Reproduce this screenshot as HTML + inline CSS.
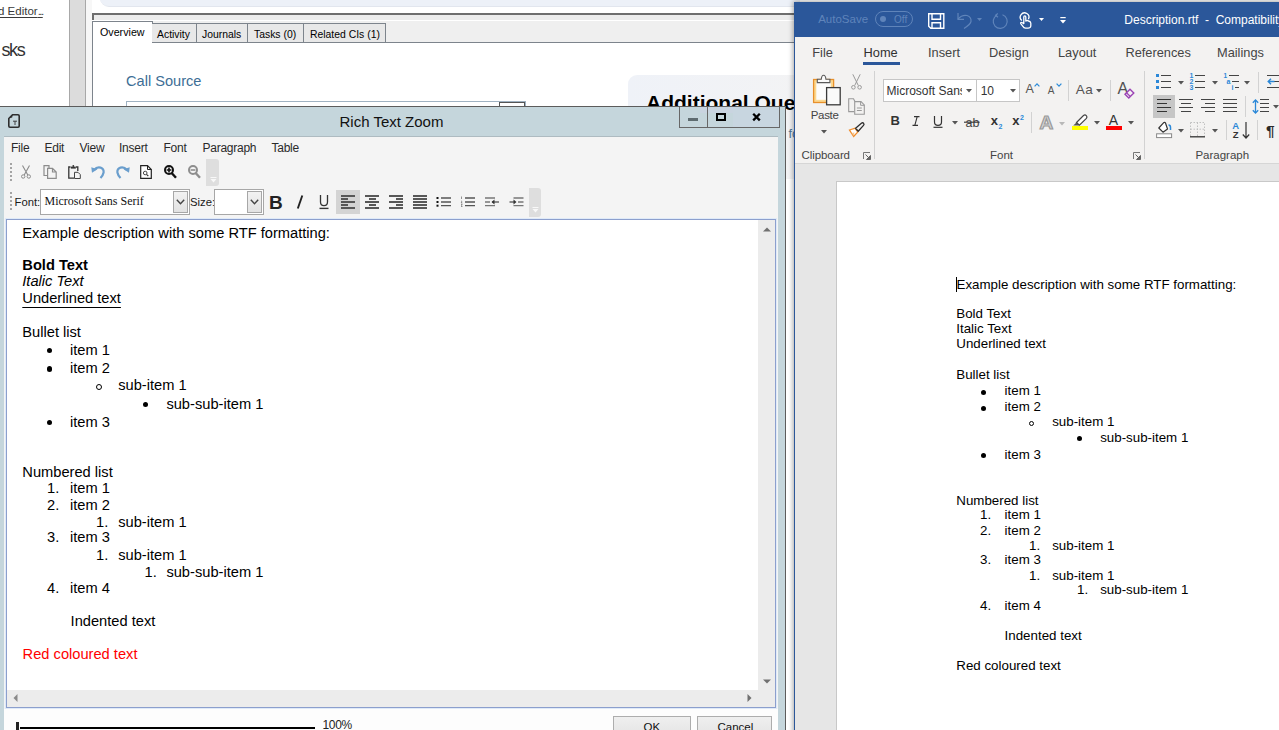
<!DOCTYPE html>
<html><head><meta charset="utf-8">
<style>
*{box-sizing:border-box}
html,body{margin:0;padding:0}
body{width:1279px;height:730px;overflow:hidden;position:relative;background:#fff;font-family:"Liberation Sans",sans-serif;color:#000}
.a{position:absolute}
.t{position:absolute;white-space:pre;line-height:1}
svg{position:absolute;overflow:visible}
</style></head><body>

<!-- ===== Background app ===== -->
<div class="t" style="left:-2px;top:6px;font-size:11.5px;color:#3a3a3a;text-decoration:underline;text-underline-offset:2px">d Editor<span style="letter-spacing:-1.5px">...</span></div>
<div class="t" style="left:1.5px;top:40.8px;font-size:18px;color:#333;letter-spacing:-1.4px">sks</div>
<div class="a" style="left:69px;top:0;width:17px;height:106px;background:#dcdcdc;border-left:1px solid #a8a8a8;border-right:1px solid #a8a8a8"></div>
<div class="a" style="left:86px;top:0;width:6px;height:106px;background:#f7f7f7"></div>
<!-- top rounded bluish box -->
<div class="a" style="left:100px;top:-20px;width:700px;height:27px;background:#edf1f8;border-radius:0 0 0 9px;border-bottom:1px solid #e2e6ee"></div>
<!-- dark line + band -->
<div class="a" style="left:92px;top:13px;width:702px;height:2px;background:#6e6e6e"></div>
<div class="a" style="left:92px;top:15px;width:2px;height:5px;background:#6e6e6e"></div>
<div class="a" style="left:94px;top:15px;width:700px;height:5px;background:#ececec"></div>
<div class="a" style="left:92px;top:20px;width:702px;height:1px;background:#fff"></div>
<div class="a" style="left:92px;top:21px;width:702px;height:22px;background:#efefef"></div>
<div class="a" style="left:92px;top:42px;width:702px;height:1px;background:#7d848c"></div>
<div class="a" style="left:92px;top:43px;width:702px;height:63px;background:#fff"></div>
<!-- tabs -->
<div class="a" style="left:92px;top:21px;width:61px;height:22px;background:#fff;border:1px solid #7d848c;border-bottom:none"></div>
<div class="t" style="left:100px;top:27px;font-size:10.7px;color:#000">Overview</div>
<div class="a" style="left:92px;top:43px;width:1px;height:63px;background:#7d848c"></div>
<div class="a" style="left:152px;top:23px;width:45px;height:20px;background:#e8e8e8;border:1px solid #7d848c;border-left:none"></div>
<div class="t" style="left:157px;top:29.5px;font-size:10.4px">Activity</div>
<div class="a" style="left:196px;top:23px;width:52px;height:20px;background:#e8e8e8;border:1px solid #7d848c"></div>
<div class="t" style="left:202px;top:29.5px;font-size:10.4px">Journals</div>
<div class="a" style="left:247px;top:23px;width:57px;height:20px;background:#e8e8e8;border:1px solid #7d848c"></div>
<div class="t" style="left:254px;top:29.5px;font-size:10.4px">Tasks (0)</div>
<div class="a" style="left:303px;top:23px;width:83px;height:20px;background:#e8e8e8;border:1px solid #7d848c"></div>
<div class="t" style="left:310px;top:29.5px;font-size:10.4px">Related CIs (1)</div>
<!-- call source -->
<div class="t" style="left:126px;top:73.5px;font-size:14.6px;color:#3d6e95">Call Source</div>
<div class="a" style="left:126px;top:101px;width:400px;height:10px;background:#fff;border:1px solid #9fb2c2"></div>
<div class="a" style="left:499px;top:102px;width:26px;height:10px;background:#fff;border:1px solid #555"></div>
<!-- additional questions -->
<div class="a" style="left:628px;top:75px;width:180px;height:104px;background:linear-gradient(90deg,#eff2f8,#f3f3f4);border-radius:9px 0 0 0"></div>
<div class="t" style="left:788.5px;top:128px;font-size:12.5px;color:#4d7394">fo</div>
<div class="t" style="left:646px;top:91.5px;font-size:21px;font-weight:bold;color:#000">Additional Que</div>

<!-- ===== Rich Text Zoom dialog ===== -->
<div id="dlg" class="a" style="left:-2px;top:106px;width:788px;height:630px;background:#c5d6dc;border-top:1px solid #5c5c5c;border-right:1px solid #5c5c5c"></div>
<svg style="left:8px;top:114px" width="12" height="14" viewBox="0 0 12 14"><path d="M4.5 0.8 H10 Q11.2 0.8 11.2 2 V12 Q11.2 13.2 10 13.2 H2 Q0.8 13.2 0.8 12 V4.5 Z" fill="none" stroke="#2e2e2e" stroke-width="1.6" stroke-linejoin="round"/><path d="M1.2 4.2 L4.6 0.8 L4.2 3.6 Z" fill="#2e2e2e"/><path d="M5 7.2 H9 M7 7.2 V11" stroke="#333" stroke-width="0.9"/></svg>
<div class="t" style="left:339.5px;top:114px;font-size:15px;color:#111">Rich Text Zoom</div>
<div class="a" style="left:700px;top:107px;width:78px;height:6px;background:#c9d4e0"></div>
<div class="a" style="left:679px;top:107px;width:29px;height:21px;border:1px solid #676767;border-top:none"></div>
<div class="a" style="left:707px;top:107px;width:27px;height:21px;border:1px solid #676767;border-top:none;border-left:none"></div>
<div class="a" style="left:733px;top:107px;width:47px;height:21px;border:1px solid #676767;border-top:none;border-left:none;background:#c8d6e0"></div>
<div class="a" style="left:688px;top:118px;width:10px;height:3px;background:#5e6c70"></div>
<div class="a" style="left:716px;top:113px;width:10px;height:8px;border:2.4px solid #000"></div>
<svg style="left:752px;top:113px" width="9" height="8" viewBox="0 0 9 8"><path d="M1.2 0.8 L7.8 7.4 M7.8 0.8 L1.2 7.4" stroke="#000" stroke-width="2.3"/></svg>
<!-- client area -->
<div class="a" style="left:4px;top:136px;width:774px;height:600px;background:#f4f4f4;border-top:1px solid #aebbc1"></div>
<div class="t" style="left:11px;top:141.7px;font-size:12px;letter-spacing:-0.25px;color:#2a2a2a">File</div>
<div class="t" style="left:44.5px;top:141.7px;font-size:12px;letter-spacing:-0.25px;color:#2a2a2a">Edit</div>
<div class="t" style="left:79.5px;top:141.7px;font-size:12px;letter-spacing:-0.25px;color:#2a2a2a">View</div>
<div class="t" style="left:119px;top:141.7px;font-size:12px;letter-spacing:-0.25px;color:#2a2a2a">Insert</div>
<div class="t" style="left:163.5px;top:141.7px;font-size:12px;letter-spacing:-0.25px;color:#2a2a2a">Font</div>
<div class="t" style="left:202.5px;top:141.7px;font-size:12px;letter-spacing:-0.25px;color:#2a2a2a">Paragraph</div>
<div class="t" style="left:271.5px;top:141.7px;font-size:12px;letter-spacing:-0.25px;color:#2a2a2a">Table</div>
<!-- toolbar 1 -->
<div class="a" style="left:10px;top:163px;width:2px;height:18px;background:repeating-linear-gradient(180deg,#a4a4a4 0 2px,transparent 2px 4px)"></div>
<svg style="left:21px;top:165px" width="10" height="14" viewBox="0 0 10 14"><path d="M1.5 0.5 L6.8 10 M8.5 0.5 L3.2 10" stroke="#8a8a8a" stroke-width="1.1" fill="none"/><circle cx="2.2" cy="11.5" r="1.7" stroke="#8a8a8a" stroke-width="1" fill="none"/><circle cx="7.8" cy="11.5" r="1.7" stroke="#8a8a8a" stroke-width="1" fill="none"/></svg>
<svg style="left:43px;top:165px" width="14" height="14" viewBox="0 0 14 14"><path d="M6 3 V0.7 H1 V10.5 H4" fill="none" stroke="#8c8c8c" stroke-width="1.2"/><path d="M4.6 3.3 H9.5 L13.2 7 V13.3 H4.6 Z M9.5 3.3 V7 H13.2" fill="none" stroke="#8c8c8c" stroke-width="1.2"/></svg>
<svg style="left:68px;top:165px" width="13" height="14" viewBox="0 0 13 14"><path d="M2.5 2 H0.8 V13.2 H6" fill="none" stroke="#333" stroke-width="1.3"/><path d="M8 2 H9.8 V6" fill="none" stroke="#333" stroke-width="1.3"/><path d="M2.8 1.6 H7.8 V3.6 H2.8 Z" fill="#333"/><circle cx="5.3" cy="1" r="0.9" fill="#333"/><path d="M6.5 7.3 H10 L12.3 9.6 V13.5 H6.5 Z" fill="#f4f4f4" stroke="#444" stroke-width="1"/></svg>
<svg style="left:91px;top:165px" width="15" height="14" viewBox="0 0 15 14"><path d="M3 5 Q6 1.5 9.5 2.6 Q13 4 12.6 7.5 Q12 10.5 9.5 13" fill="none" stroke="#6a9ecd" stroke-width="2.2"/><path d="M0.3 2.3 L6.5 4.3 L1 7.8 Z" fill="#6a9ecd"/></svg>
<svg style="left:115px;top:165px" width="15" height="14" viewBox="0 0 15 14"><path d="M12 5 Q9 1.5 5.5 2.6 Q2 4 2.4 7.5 Q3 10.5 5.5 13" fill="none" stroke="#6a9ecd" stroke-width="2.2"/><path d="M14.7 2.3 L8.5 4.3 L14 7.8 Z" fill="#6a9ecd"/></svg>
<svg style="left:140px;top:165px" width="12" height="14" viewBox="0 0 12 14"><path d="M0.7 0.7 H7.5 L11.3 4.5 V13.3 H0.7 Z" fill="#fff" stroke="#222" stroke-width="1.2"/><path d="M7.5 0.7 V4.5 H11.3" fill="none" stroke="#222" stroke-width="1"/><circle cx="5.2" cy="8" r="1.8" fill="none" stroke="#333" stroke-width="0.9"/><path d="M6.5 9.3 L8.3 11" stroke="#333" stroke-width="1.1"/></svg>
<svg style="left:163.5px;top:165px" width="13" height="14" viewBox="0 0 13 14"><circle cx="5" cy="5" r="4" fill="none" stroke="#111" stroke-width="2"/><path d="M5 2.6 V7.4 M2.6 5 H7.4" stroke="#111" stroke-width="1.6"/><path d="M7.6 8 L12 12.8" stroke="#111" stroke-width="2.4"/></svg>
<svg style="left:187.5px;top:165px" width="13" height="14" viewBox="0 0 13 14"><circle cx="5" cy="5" r="4" fill="none" stroke="#8e8e8e" stroke-width="2"/><path d="M2.6 5 H7.4" stroke="#8e8e8e" stroke-width="1.6"/><path d="M7.6 8 L12 12.8" stroke="#8e8e8e" stroke-width="2.4"/></svg>
<div class="a" style="left:206px;top:159px;width:13px;height:27px;background:#dedede;border-radius:0 3px 3px 0"></div>
<svg style="left:210px;top:177px" width="7" height="6" viewBox="0 0 7 6"><path d="M0.5 0.5 H6.5" stroke="#f8f8f8" stroke-width="1"/><path d="M0.5 2 H6.5 L3.5 5.5 Z" fill="#f8f8f8"/></svg>
<!-- toolbar 2 -->
<div class="a" style="left:10px;top:192px;width:2px;height:18px;background:repeating-linear-gradient(180deg,#a4a4a4 0 2px,transparent 2px 4px)"></div>
<div class="t" style="left:14.5px;top:197px;font-size:11.3px;color:#1a1a1a">Font:</div>
<div class="a" style="left:40px;top:189px;width:150px;height:26px;background:#fff;border:1px solid #a7a7a7"></div>
<div class="t" style="left:44.5px;top:195px;font-size:12px;font-family:'Liberation Serif',serif;color:#111">Microsoft Sans Serif</div>
<div class="a" style="left:173px;top:191px;width:15px;height:22px;background:linear-gradient(#f2f2f2,#e2e2e2);border:1px solid #a7a7a7"></div>
<svg style="left:176px;top:199px" width="9" height="6" viewBox="0 0 9 6"><path d="M0.8 0.8 L4.5 4.8 L8.2 0.8" fill="none" stroke="#444" stroke-width="1.4"/></svg>
<div class="t" style="left:190px;top:197px;font-size:11.3px;color:#1a1a1a">Size:</div>
<div class="a" style="left:214px;top:189px;width:50px;height:26px;background:#fff;border:1px solid #a7a7a7"></div>
<div class="a" style="left:247px;top:191px;width:15px;height:22px;background:linear-gradient(#f2f2f2,#e2e2e2);border:1px solid #a7a7a7"></div>
<svg style="left:250px;top:199px" width="9" height="6" viewBox="0 0 9 6"><path d="M0.8 0.8 L4.5 4.8 L8.2 0.8" fill="none" stroke="#444" stroke-width="1.4"/></svg>
<div class="t" style="left:269px;top:193.4px;font-size:19px;font-weight:bold;color:#222">B</div>
<svg style="left:296px;top:195px" width="8" height="14" viewBox="0 0 8 14"><path d="M6.3 0.5 L1.8 13.5" stroke="#222" stroke-width="1.9"/></svg>
<svg style="left:319px;top:195px" width="10" height="15" viewBox="0 0 10 15"><path d="M1.5 0 V7 Q1.5 10.6 5 10.6 Q8.5 10.6 8.5 7 V0" fill="none" stroke="#333" stroke-width="1.3"/><path d="M0.5 13.4 H9.5" stroke="#333" stroke-width="1.4"/></svg>
<div class="a" style="left:336px;top:190px;width:24px;height:24px;background:#d4d4d4"></div>
<div class="a" style="left:341px;top:195.2px;width:14px;height:1.6px;background:#585858"></div><div class="a" style="left:341px;top:198.2px;width:7px;height:1.6px;background:#585858"></div><div class="a" style="left:341px;top:201.2px;width:14px;height:1.6px;background:#585858"></div><div class="a" style="left:341px;top:204.2px;width:7px;height:1.6px;background:#585858"></div><div class="a" style="left:341px;top:207.2px;width:14px;height:1.6px;background:#585858"></div>
<div class="a" style="left:365px;top:195.2px;width:14px;height:1.6px;background:#585858"></div><div class="a" style="left:368.5px;top:198.2px;width:7px;height:1.6px;background:#585858"></div><div class="a" style="left:365px;top:201.2px;width:14px;height:1.6px;background:#585858"></div><div class="a" style="left:368.5px;top:204.2px;width:7px;height:1.6px;background:#585858"></div><div class="a" style="left:365px;top:207.2px;width:14px;height:1.6px;background:#585858"></div>
<div class="a" style="left:389px;top:195.2px;width:14px;height:1.6px;background:#585858"></div><div class="a" style="left:396px;top:198.2px;width:7px;height:1.6px;background:#585858"></div><div class="a" style="left:389px;top:201.2px;width:14px;height:1.6px;background:#585858"></div><div class="a" style="left:396px;top:204.2px;width:7px;height:1.6px;background:#585858"></div><div class="a" style="left:389px;top:207.2px;width:14px;height:1.6px;background:#585858"></div>
<div class="a" style="left:413px;top:195.2px;width:14px;height:1.6px;background:#585858"></div><div class="a" style="left:413px;top:198.2px;width:14px;height:1.6px;background:#585858"></div><div class="a" style="left:413px;top:201.2px;width:14px;height:1.6px;background:#585858"></div><div class="a" style="left:413px;top:204.2px;width:14px;height:1.6px;background:#585858"></div><div class="a" style="left:413px;top:207.2px;width:14px;height:1.6px;background:#585858"></div>
<svg style="left:436px;top:196px" width="16" height="11" viewBox="0 0 16 11"><rect x="0.5" y="1" width="2" height="2" fill="#111"/><rect x="0.5" y="5" width="2" height="2" fill="#111"/><rect x="0.5" y="8.7" width="2" height="2" fill="#111"/><path d="M5 2 H15 M5 6 H15 M5 9.7 H15" stroke="#555" stroke-width="1.3"/></svg>
<svg style="left:460px;top:196px" width="16" height="11" viewBox="0 0 16 11"><path d="M1.5 0.5 V3 M1 4.8 Q2.6 5 1.2 7 H2.4 M1 8.5 H2.2 L1.6 9.5 L2.2 10.5 H1" stroke="#777" stroke-width="0.8" fill="none"/><path d="M5 2 H15 M5 6 H15 M5 9.7 H15" stroke="#555" stroke-width="1.3"/></svg>
<svg style="left:484px;top:196px" width="16" height="11" viewBox="0 0 16 11"><path d="M1 2 H11 M1 6 H6 M1 9.7 H11" stroke="#777" stroke-width="1.3"/><path d="M8 6 H15" stroke="#444" stroke-width="1.2"/><path d="M7.5 6 L10.5 3.5 L10.5 8.5 Z" fill="#333"/></svg>
<svg style="left:509px;top:196px" width="16" height="11" viewBox="0 0 16 11"><path d="M4.5 2 H14.5 M9 6 H14.5 M4.5 9.7 H14.5" stroke="#777" stroke-width="1.3"/><path d="M0.5 6 H6" stroke="#444" stroke-width="1.2"/><path d="M7.5 6 L4.5 3.5 L4.5 8.5 Z" fill="#333"/></svg>
<div class="a" style="left:529px;top:188px;width:12px;height:29px;background:#dedede;border-radius:0 3px 3px 0"></div>
<svg style="left:532px;top:207px" width="7" height="6" viewBox="0 0 7 6"><path d="M0.5 0.5 H6.5" stroke="#f8f8f8" stroke-width="1"/><path d="M0.5 2 H6.5 L3.5 5.5 Z" fill="#f8f8f8"/></svg>
<!-- editor -->
<div class="a" style="left:5px;top:218px;width:772px;height:491px;border:1px solid #dfeaf8"></div>
<div class="a" style="left:6px;top:219px;width:770px;height:489px;background:#fff;border:1px solid #8c9fcd"></div>
<div class="a" style="left:758px;top:220px;width:17px;height:487px;background:#ececec"></div>
<div class="a" style="left:7px;top:690px;width:768px;height:17px;background:#ececec"></div>
<svg style="left:763px;top:227px" width="8" height="5" viewBox="0 0 8 5"><path d="M0 4.5 L4 0.5 L8 4.5 Z" fill="#707070"/></svg>
<svg style="left:763px;top:679px" width="8" height="5" viewBox="0 0 8 5"><path d="M0 0.5 L4 4.5 L8 0.5 Z" fill="#707070"/></svg>
<svg style="left:13px;top:694px" width="5" height="8" viewBox="0 0 5 8"><path d="M4.5 0 L0.5 4 L4.5 8 Z" fill="#8a8a8a"/></svg>
<svg style="left:747px;top:694px" width="5" height="8" viewBox="0 0 5 8"><path d="M0.5 0 L4.5 4 L0.5 8 Z" fill="#707070"/></svg>
<!-- editor text -->
<div class="t" style="left:22.3px;top:226.08px;font-size:14.67px;">Example description with some RTF formatting:</div>
<div class="t" style="left:22.3px;top:258.38px;font-size:14.67px;font-weight:bold">Bold Text</div>
<div class="t" style="left:22.3px;top:274.08px;font-size:14.67px;font-style:italic">Italic Text</div>
<div class="t" style="left:22.3px;top:291.48px;font-size:14.67px;text-decoration:underline;text-underline-offset:3.5px">Underlined text</div>
<div class="t" style="left:22.3px;top:324.78px;font-size:14.67px;">Bullet list</div>
<div class="a" style="left:47.20px;top:348.30px;width:5.2px;height:5.2px;border-radius:50%;background:#000"></div>
<div class="t" style="left:70px;top:342.98px;font-size:14.67px;">item 1</div>
<div class="a" style="left:47.20px;top:366.40px;width:5.2px;height:5.2px;border-radius:50%;background:#000"></div>
<div class="t" style="left:70px;top:361.08px;font-size:14.67px;">item 2</div>
<div class="a" style="left:95.50px;top:384.30px;width:6px;height:6px;border-radius:50%;border:1.1px solid #000"></div>
<div class="t" style="left:118.2px;top:377.98px;font-size:14.67px;">sub-item 1</div>
<div class="a" style="left:143.00px;top:401.90px;width:5.2px;height:5.2px;border-radius:50%;background:#000"></div>
<div class="t" style="left:166.4px;top:396.58px;font-size:14.67px;">sub-sub-item 1</div>
<div class="a" style="left:47.20px;top:419.90px;width:5.2px;height:5.2px;border-radius:50%;background:#000"></div>
<div class="t" style="left:70px;top:414.58px;font-size:14.67px;">item 3</div>
<div class="t" style="left:22.3px;top:464.78px;font-size:14.67px;">Numbered list</div>
<div class="t" style="left:47px;top:481.38px;font-size:14.67px;">1.</div>
<div class="t" style="left:70px;top:481.38px;font-size:14.67px;">item 1</div>
<div class="t" style="left:47px;top:497.58px;font-size:14.67px;">2.</div>
<div class="t" style="left:70px;top:497.58px;font-size:14.67px;">item 2</div>
<div class="t" style="left:96px;top:514.68px;font-size:14.67px;">1.</div>
<div class="t" style="left:118.2px;top:514.68px;font-size:14.67px;">sub-item 1</div>
<div class="t" style="left:47px;top:530.48px;font-size:14.67px;">3.</div>
<div class="t" style="left:70px;top:530.48px;font-size:14.67px;">item 3</div>
<div class="t" style="left:96px;top:547.58px;font-size:14.67px;">1.</div>
<div class="t" style="left:118.2px;top:547.58px;font-size:14.67px;">sub-item 1</div>
<div class="t" style="left:144.5px;top:564.58px;font-size:14.67px;">1.</div>
<div class="t" style="left:166.4px;top:564.58px;font-size:14.67px;">sub-sub-item 1</div>
<div class="t" style="left:47px;top:580.78px;font-size:14.67px;">4.</div>
<div class="t" style="left:70px;top:580.78px;font-size:14.67px;">item 4</div>
<div class="t" style="left:70.6px;top:614.48px;font-size:14.67px;">Indented text</div>
<div class="t" style="left:22.6px;top:647.48px;font-size:14.67px;color:#f00">Red coloured text</div>
<!-- bottom area -->
<div class="a" style="left:4px;top:709px;width:774px;height:30px;background:#fdfdfd"></div>
<div class="a" style="left:16px;top:722px;width:3px;height:10px;background:#222"></div>
<div class="a" style="left:20px;top:727px;width:295px;height:2px;background:#000"></div>
<div class="t" style="left:322.5px;top:718.8px;font-size:12px;color:#222;letter-spacing:-0.3px">100%</div>
<div class="a" style="left:613px;top:716px;width:78px;height:24px;background:linear-gradient(#efefef,#e3e3e3);border:1px solid #adadad"></div>
<div class="t" style="left:643.5px;top:721.5px;font-size:11.5px;color:#111">OK</div>
<div class="a" style="left:697px;top:716px;width:75px;height:24px;background:linear-gradient(#efefef,#e3e3e3);border:1px solid #adadad"></div>
<div class="t" style="left:717.5px;top:721.5px;font-size:11.5px;color:#111">Cancel</div>
<!-- ===== Word window ===== -->
<div id="word" class="a" style="left:794px;top:2px;width:490px;height:740px;background:#e6e6e6;border-left:1px solid #2b579a;box-shadow:-1px -1px 5px rgba(0,0,0,0.35)"></div>
<div class="a" style="left:795px;top:2px;width:490px;height:35px;background:#2b579a"></div>
<div class="t" style="left:818.2px;top:13.96px;font-size:11.5px;color:#5f84ba">AutoSave</div>
<div class="a" style="left:875px;top:11px;width:38px;height:16px;border:1px solid #5f84ba;border-radius:8px"></div>
<div class="a" style="left:879.6px;top:15.8px;width:6.6px;height:6.6px;border-radius:50%;background:#5f84ba"></div>
<div class="t" style="left:894px;top:14.53px;font-size:10px;color:#5f84ba">Off</div>
<svg style="left:928px;top:13px" width="17" height="16" viewBox="0 0 17 16"><path d="M0.7 0.7 H15.8 V15.3 H2.8 L0.7 13.2 Z" fill="none" stroke="#fff" stroke-width="1.4"/><path d="M4 0.7 V6.2 H12.5 V0.7" fill="none" stroke="#fff" stroke-width="1.4"/><path d="M4 15.3 V9.8 H12.5 V15.3" fill="none" stroke="#fff" stroke-width="1.4"/></svg>
<svg style="left:957px;top:12px" width="16" height="17" viewBox="0 0 16 17"><path d="M1 7 Q5 2.5 10 3.5 Q14.5 5 14 9.5 Q13.3 12.5 7 16.5" fill="none" stroke="#5f84ba" stroke-width="1.2"/><path d="M1 1 V7.3 H7" fill="none" stroke="#5f84ba" stroke-width="1.2"/></svg>
<svg style="left:977px;top:17.8px" width="5" height="3" viewBox="0 0 5 3"><path d="M0 0 H5 L2.5 3 Z" fill="#5f84ba"/></svg>
<svg style="left:991.5px;top:13px" width="17" height="17" viewBox="0 0 17 17"><path d="M5 2.2 A7 7 0 1 0 10.5 1.8" fill="none" stroke="#5f84ba" stroke-width="1.2"/><path d="M5.8 0.5 L3.6 2.3 L6 4.2" fill="none" stroke="#5f84ba" stroke-width="1.2"/></svg>
<svg style="left:1018.5px;top:12px" width="13" height="17" viewBox="0 0 13 17"><path d="M2.8 8.5 A4.3 4.3 0 1 1 9.4 7.2" fill="none" stroke="#fff" stroke-width="1.3"/><path d="M4.8 12 V5 Q4.8 3.8 5.8 3.8 Q6.8 3.8 6.8 5 V9 Q8.3 8 9.5 9 Q11.5 9.2 11.8 11 V14 Q11.5 16.2 9 16.2 H6.5 Q5 16 3.5 13.8 L1.8 11.6 Q1.3 10.5 2.4 10.3 Q3.3 10.3 4.8 12" fill="#2b579a" stroke="#fff" stroke-width="1.3" stroke-linejoin="round"/></svg>
<svg style="left:1039px;top:17.8px" width="5" height="3" viewBox="0 0 5 3"><path d="M0 0 H5 L2.5 3 Z" fill="#fff"/></svg>
<svg style="left:1059.5px;top:16.5px" width="6" height="7" viewBox="0 0 6 7"><path d="M0.3 0.6 H5.7" stroke="#fff" stroke-width="1.2"/><path d="M0 3 H6 L3 6.6 Z" fill="#fff"/></svg>
<div class="t" style="left:1124.3px;top:13.64px;font-size:12px;color:#fff">Description.rtf  -  Compatibility Mode  -  Word</div>
<div class="a" style="left:795px;top:37px;width:490px;height:126px;background:#f3f2f1"></div>
<div class="a" style="left:795px;top:163px;width:490px;height:1px;background:#d6d6d6"></div>
<div class="t" style="left:812.3px;top:46.66px;font-size:12.8px;color:#444">File</div>
<div class="t" style="left:863.6px;top:46.66px;font-size:12.8px;color:#444;color:#303030">Home</div>
<div class="t" style="left:928px;top:46.66px;font-size:12.8px;color:#444">Insert</div>
<div class="t" style="left:989px;top:46.66px;font-size:12.8px;color:#444">Design</div>
<div class="t" style="left:1058px;top:46.66px;font-size:12.8px;color:#444">Layout</div>
<div class="t" style="left:1125.4px;top:46.66px;font-size:12.8px;color:#444">References</div>
<div class="t" style="left:1217px;top:46.66px;font-size:12.8px;color:#444">Mailings</div>
<div class="a" style="left:863px;top:62px;width:37px;height:3px;background:#2b579a"></div>
<svg style="left:812px;top:74px" width="30" height="32" viewBox="0 0 30 32"><rect x="1.6" y="5.5" width="20" height="23" fill="#fcd88f" stroke="#e8902a" stroke-width="1.3"/><rect x="4.3" y="8.3" width="14.5" height="17.5" fill="#fcfcfc"/><path d="M5.3 8.6 V5.2 H9.3 Q9.6 1.2 11.6 1.2 Q13.6 1.2 13.9 5.2 H17.9 V8.6 Z" fill="#fafafa" stroke="#5a5a5a" stroke-width="1.1"/><rect x="14.6" y="13.6" width="13.6" height="17.2" fill="#fafafa" stroke="#3a3a3a" stroke-width="1.3"/></svg>
<div class="t" style="left:810.7px;top:110.46px;font-size:11.5px;color:#444;letter-spacing:-0.3px">Paste</div>
<svg style="left:820.7px;top:129.7px" width="6" height="4" viewBox="0 0 6 4"><path d="M0 0 H6 L3 3.5 Z" fill="#555"/></svg>
<svg style="left:850.5px;top:74px" width="11" height="16" viewBox="0 0 11 16"><path d="M1.8 0.3 L7.3 11.5 M9.2 0.3 L3.7 11.5" stroke="#9a9a9a" stroke-width="1" fill="none"/><circle cx="2.4" cy="13.3" r="1.8" stroke="#9a9a9a" stroke-width="1" fill="none"/><circle cx="8.6" cy="13.3" r="1.8" stroke="#9a9a9a" stroke-width="1" fill="none"/></svg>
<svg style="left:847.5px;top:97.5px" width="17" height="17" viewBox="0 0 17 17"><path d="M6.8 3.2 L5.5 0.7 H0.7 V13.6 H6" fill="none" stroke="#9a9a9a" stroke-width="1.1"/><path d="M6.7 3.6 H13 L16.3 6.9 V16.3 H6.7 Z" fill="#f3f2f1" stroke="#9a9a9a" stroke-width="1.1"/><path d="M12.6 3.6 V7.3 H16.3 M8.9 10 H13.8 M8.9 12.5 H13.8" stroke="#9a9a9a" stroke-width="1" fill="none"/></svg>
<svg style="left:848px;top:121.5px" width="17" height="16" viewBox="0 0 17 16"><path d="M0.5 7.8 L7.2 5.6 L10.6 10 L5.6 15.4 Z" fill="#f08c2a"/><path d="M2.4 8.3 L6.8 6.9 L9 9.9 L5.6 13.6 Z" fill="#fff"/><path d="M3.6 11 L6.5 10.5 L5.6 13.6 Z" fill="#f9c48a"/><path d="M7.6 6.2 L13.4 1.2 Q14.6 0.3 15.6 1.3 Q16.5 2.4 15.5 3.4 L10.2 9.2 Z" fill="#f3f2f1" stroke="#2e2e2e" stroke-width="1.3" stroke-linejoin="round"/></svg>
<div class="a" style="left:874px;top:71px;width:1px;height:88px;background:#d2d2d2"></div>
<div class="t" style="left:801.6px;top:149.96px;font-size:11.5px;color:#444;letter-spacing:-0.1px">Clipboard</div>
<svg style="left:863px;top:152px" width="8" height="8" viewBox="0 0 8 8"><path d="M0.5 7 V0.5 H7" fill="none" stroke="#777" stroke-width="1"/><path d="M2.5 2.5 L6.5 6.5 M7.5 3.5 V7.5 H3.5 Z" stroke="#666" stroke-width="1" fill="#666"/></svg>
<div class="a" style="left:883px;top:79px;width:94px;height:23px;background:#fff;border:1px solid #c6c6c6"></div>
<div class="a" style="left:976px;top:79px;width:44px;height:23px;background:#fff;border:1px solid #c6c6c6"></div>
<div class="a" style="left:886px;top:80px;width:76px;height:20px;overflow:hidden"><div class="t" style="left:0.5px;top:5px;font-size:12px;color:#333">Microsoft Sans</div></div>
<svg style="left:966.3px;top:88.5px" width="6" height="4" viewBox="0 0 6 4"><path d="M0 0 H6 L3 3.5 Z" fill="#555"/></svg>
<div class="t" style="left:980.7px;top:85.04px;font-size:12px;color:#333">10</div>
<svg style="left:1009.5px;top:88.5px" width="6" height="4" viewBox="0 0 6 4"><path d="M0 0 H6 L3 3.5 Z" fill="#555"/></svg>
<div class="t" style="left:890.5px;top:114.49px;font-size:13px;font-weight:bold;color:#333">B</div>
<svg style="left:912px;top:116px" width="8" height="10" viewBox="0 0 8 10"><path d="M2 0.6 H7.5 M0.5 9.4 H6 M5.2 0.6 L2.8 9.4" stroke="#333" stroke-width="1.1" fill="none"/></svg>
<svg style="left:933px;top:116px" width="10" height="12" viewBox="0 0 10 12"><path d="M1.5 0 V6 Q1.5 9.3 5 9.3 Q8.5 9.3 8.5 6 V0" fill="none" stroke="#333" stroke-width="1.2"/><path d="M0.5 11.3 H9.5" stroke="#333" stroke-width="1.2"/></svg>
<svg style="left:951.5px;top:120.8px" width="6" height="4" viewBox="0 0 6 4"><path d="M0 0 H6 L3 3.5 Z" fill="#555"/></svg>
<svg style="left:964px;top:115px" width="16" height="13" viewBox="0 0 16 13"><text x="1.5" y="11.5" font-family="Liberation Sans" font-size="12.5" fill="#444">ab</text><path d="M0 7.2 H15.6" stroke="#333" stroke-width="1.1"/></svg>
<div class="t" style="left:990.7px;top:114.19px;font-size:13px;font-weight:bold;color:#333">x</div>
<div class="t" style="left:998.6px;top:122.87px;font-size:7px;font-weight:bold;color:#2b8ad8">2</div>
<div class="t" style="left:1012.3px;top:114.19px;font-size:13px;font-weight:bold;color:#333">x</div>
<div class="t" style="left:1020px;top:114.07px;font-size:7px;font-weight:bold;color:#2b8ad8">2</div>
<div class="a" style="left:1031px;top:112px;width:1px;height:21px;background:#d2d2d2"></div>
<div class="t" style="left:1025.5px;top:83.42px;font-size:12.5px;color:#555">A</div>
<svg style="left:1034px;top:82.5px" width="6" height="4" viewBox="0 0 6 4"><path d="M0.6 3.4 L3 0.8 L5.4 3.4" fill="none" stroke="#2b8ad8" stroke-width="1.2"/></svg>
<div class="t" style="left:1047.8px;top:85.53px;font-size:10px;color:#555">A</div>
<svg style="left:1055.5px;top:82.5px" width="6" height="4" viewBox="0 0 6 4"><path d="M0.6 0.6 L3 3.2 L5.4 0.6" fill="none" stroke="#2b8ad8" stroke-width="1.2"/></svg>
<div class="a" style="left:1068px;top:80px;width:1px;height:21px;background:#d2d2d2"></div>
<div class="t" style="left:1075.8px;top:83.07px;font-size:13.5px;color:#555;letter-spacing:0.4px">Aa</div>
<svg style="left:1096px;top:89px" width="6" height="4" viewBox="0 0 6 4"><path d="M0 0 H6 L3 3.5 Z" fill="#555"/></svg>
<div class="a" style="left:1110px;top:80px;width:1px;height:21px;background:#d2d2d2"></div>
<div class="t" style="left:1117.5px;top:81.45px;font-size:16px;color:#505050">A</div>
<svg style="left:1124px;top:87.5px" width="11" height="11" viewBox="0 0 11 11"><path d="M1 6.3 L6 1.3 L9.8 5 L4.8 10 Z" fill="#f3f2f1" stroke="#9b42b5" stroke-width="1.4"/><path d="M2.5 4.8 L6.3 8.5" stroke="#9b42b5" stroke-width="1.2"/></svg>
<div class="a" style="left:1144px;top:71px;width:1px;height:88px;background:#d2d2d2"></div>
<div class="t" style="left:1039.5px;top:112.61px;font-size:19px;color:#d4d4d4;-webkit-text-stroke:1.2px #9a9a9a;font-weight:bold">A</div>
<svg style="left:1059px;top:122px" width="6" height="4" viewBox="0 0 6 4"><path d="M0 0 H6 L3 3.5 Z" fill="#b8b8b8"/></svg>
<svg style="left:1072px;top:113.5px" width="17" height="12" viewBox="0 0 17 12"><path d="M4.5 8.5 L11.5 1.5 Q13 0.3 14.3 1.6 Q15.6 2.9 14.4 4.4 L7.4 11.2 Z" fill="#fff" stroke="#444" stroke-width="1.2"/><path d="M4.5 8.5 L1.2 11.5 H7.2 Z" fill="#555"/></svg>
<div class="a" style="left:1072px;top:126px;width:16px;height:4px;background:#ffff00"></div>
<svg style="left:1093.8px;top:121px" width="6" height="4" viewBox="0 0 6 4"><path d="M0 0 H6 L3 3.5 Z" fill="#555"/></svg>
<div class="t" style="left:1108.8px;top:112.95px;font-size:14px;color:#333">A</div>
<div class="a" style="left:1106px;top:126px;width:16px;height:4px;background:#ff0000"></div>
<svg style="left:1127.7px;top:121px" width="6" height="4" viewBox="0 0 6 4"><path d="M0 0 H6 L3 3.5 Z" fill="#555"/></svg>
<div class="t" style="left:990px;top:149.96px;font-size:11.5px;color:#444">Font</div>
<svg style="left:1133px;top:152px" width="8" height="8" viewBox="0 0 8 8"><path d="M0.5 7 V0.5 H7" fill="none" stroke="#777" stroke-width="1"/><path d="M2.5 2.5 L6.5 6.5 M7.5 3.5 V7.5 H3.5 Z" stroke="#666" stroke-width="1" fill="#666"/></svg>
<div class="a" style="left:1156px;top:74.0px;width:3px;height:3px;background:#2b88d8"></div>
<div class="a" style="left:1161px;top:74.90px;width:10px;height:1.2px;background:#444"></div>
<div class="a" style="left:1156px;top:80.0px;width:3px;height:3px;background:#2b88d8"></div>
<div class="a" style="left:1161px;top:80.90px;width:10px;height:1.2px;background:#444"></div>
<div class="a" style="left:1156px;top:86.0px;width:3px;height:3px;background:#2b88d8"></div>
<div class="a" style="left:1161px;top:86.90px;width:10px;height:1.2px;background:#444"></div>
<svg style="left:1178px;top:81px" width="6" height="4" viewBox="0 0 6 4"><path d="M0 0 H6 L3 3.5 Z" fill="#555"/></svg>
<div class="t" style="left:1189.5px;top:72.27px;font-size:7px;font-weight:bold;color:#2b88d8">1</div>
<div class="a" style="left:1195.2px;top:74.90px;width:9.799999999999955px;height:1.2px;background:#444"></div>
<div class="t" style="left:1189.5px;top:78.27px;font-size:7px;font-weight:bold;color:#2b88d8">2</div>
<div class="a" style="left:1195.2px;top:80.90px;width:9.799999999999955px;height:1.2px;background:#444"></div>
<div class="t" style="left:1189.5px;top:84.27px;font-size:7px;font-weight:bold;color:#2b88d8">3</div>
<div class="a" style="left:1195.2px;top:86.90px;width:9.799999999999955px;height:1.2px;background:#444"></div>
<svg style="left:1211.8px;top:81px" width="6" height="4" viewBox="0 0 6 4"><path d="M0 0 H6 L3 3.5 Z" fill="#555"/></svg>
<div class="t" style="left:1223.5px;top:72.50px;font-size:6.5px;font-weight:bold;color:#2b88d8">1</div>
<div class="t" style="left:1226.5px;top:78.07px;font-size:7px;font-weight:bold;color:#2b88d8">a</div>
<div class="t" style="left:1231.5px;top:84.07px;font-size:7px;font-weight:bold;color:#2b88d8">i</div>
<div class="a" style="left:1229.2px;top:74.90px;width:9.799999999999955px;height:1.2px;background:#444"></div>
<div class="a" style="left:1232.2px;top:80.90px;width:6.7999999999999545px;height:1.2px;background:#444"></div>
<div class="a" style="left:1235.2px;top:86.90px;width:3.7999999999999545px;height:1.2px;background:#444"></div>
<svg style="left:1244px;top:81px" width="6" height="4" viewBox="0 0 6 4"><path d="M0 0 H6 L3 3.5 Z" fill="#555"/></svg>
<div class="a" style="left:1258px;top:72px;width:1px;height:21px;background:#d2d2d2"></div>
<div class="a" style="left:1267px;top:74.90px;width:18px;height:1.2px;background:#444"></div>
<div class="a" style="left:1274px;top:80.90px;width:11px;height:1.2px;background:#444"></div>
<div class="a" style="left:1267px;top:86.90px;width:18px;height:1.2px;background:#444"></div>
<svg style="left:1266.5px;top:78px" width="8" height="7" viewBox="0 0 8 7"><path d="M7.5 3.5 H1.3 M4 0.8 L1.2 3.5 L4 6.2" fill="none" stroke="#2b88d8" stroke-width="1.4"/></svg>
<div class="a" style="left:1153px;top:95px;width:22px;height:23px;background:#c6c6c6"></div>
<div class="a" style="left:1157px;top:98.85px;width:14px;height:1.3px;background:#333"></div>
<div class="a" style="left:1179px;top:98.85px;width:14px;height:1.3px;background:#444"></div>
<div class="a" style="left:1201px;top:98.85px;width:14px;height:1.3px;background:#444"></div>
<div class="a" style="left:1223px;top:98.85px;width:14px;height:1.3px;background:#444"></div>
<div class="a" style="left:1157px;top:102.85px;width:10px;height:1.3px;background:#333"></div>
<div class="a" style="left:1181.3px;top:102.85px;width:9.5px;height:1.3px;background:#444"></div>
<div class="a" style="left:1205px;top:102.85px;width:10px;height:1.3px;background:#444"></div>
<div class="a" style="left:1223px;top:102.85px;width:14px;height:1.3px;background:#444"></div>
<div class="a" style="left:1157px;top:106.85px;width:14px;height:1.3px;background:#333"></div>
<div class="a" style="left:1179px;top:106.85px;width:14px;height:1.3px;background:#444"></div>
<div class="a" style="left:1201px;top:106.85px;width:14px;height:1.3px;background:#444"></div>
<div class="a" style="left:1223px;top:106.85px;width:14px;height:1.3px;background:#444"></div>
<div class="a" style="left:1157px;top:110.85px;width:10px;height:1.3px;background:#333"></div>
<div class="a" style="left:1181.3px;top:110.85px;width:9.5px;height:1.3px;background:#444"></div>
<div class="a" style="left:1205px;top:110.85px;width:10px;height:1.3px;background:#444"></div>
<div class="a" style="left:1223px;top:110.85px;width:14px;height:1.3px;background:#444"></div>
<div class="a" style="left:1245px;top:96px;width:1px;height:21px;background:#d2d2d2"></div>
<svg style="left:1252px;top:98.5px" width="7" height="15" viewBox="0 0 7 15"><path d="M3.5 1 V14" stroke="#2b88d8" stroke-width="1.3"/><path d="M0.8 3.8 L3.5 1 L6.2 3.8 M0.8 11.2 L3.5 14 L6.2 11.2" fill="none" stroke="#2b88d8" stroke-width="1.3"/></svg>
<div class="a" style="left:1260px;top:98.85px;width:9px;height:1.3px;background:#444"></div>
<div class="a" style="left:1260px;top:102.85px;width:9px;height:1.3px;background:#444"></div>
<div class="a" style="left:1260px;top:106.85px;width:9px;height:1.3px;background:#444"></div>
<div class="a" style="left:1260px;top:110.85px;width:9px;height:1.3px;background:#444"></div>
<svg style="left:1273px;top:104.5px" width="6" height="4" viewBox="0 0 6 4"><path d="M0 0 H6 L3 3.5 Z" fill="#555"/></svg>
<svg style="left:1155.5px;top:121px" width="17" height="18" viewBox="0 0 17 18"><path d="M2.8 7 L7.5 1.8 Q8.8 0.8 9.5 2 L11.5 8 L7 11.2 Z" fill="#fff" stroke="#333" stroke-width="1.2" stroke-linejoin="round"/><path d="M12.5 4 Q14.5 4 14.5 6.5 V9" fill="none" stroke="#2b88d8" stroke-width="1.5"/><rect x="0.6" y="12.8" width="15" height="3.8" fill="#fff" stroke="#888" stroke-width="1"/></svg>
<svg style="left:1178px;top:129px" width="6" height="4" viewBox="0 0 6 4"><path d="M0 0 H6 L3 3.5 Z" fill="#555"/></svg>
<svg style="left:1190px;top:122px" width="16" height="16" viewBox="0 0 16 16"><path d="M0.5 0.5 H14.5 V14 M0.5 0.5 V14 M7.5 0.5 V14 M0.5 7.2 H14.5" fill="none" stroke="#bbb" stroke-width="0.9" stroke-dasharray="1.5 1.5"/><path d="M0 14.8 H15" stroke="#333" stroke-width="1.3"/></svg>
<svg style="left:1211.8px;top:129px" width="6" height="4" viewBox="0 0 6 4"><path d="M0 0 H6 L3 3.5 Z" fill="#555"/></svg>
<div class="a" style="left:1225.5px;top:120px;width:1px;height:20px;background:#d2d2d2"></div>
<div class="t" style="left:1232.3px;top:120.76px;font-size:9.5px;font-weight:bold;color:#2b88d8">A</div>
<div class="t" style="left:1232.8px;top:129.96px;font-size:9.5px;font-weight:bold;color:#333">Z</div>
<svg style="left:1241.5px;top:121.5px" width="8" height="17" viewBox="0 0 8 17"><path d="M4 0 V16 M0.8 12.5 L4 16 L7.2 12.5" fill="none" stroke="#333" stroke-width="1.2"/></svg>
<div class="a" style="left:1256.5px;top:120px;width:1px;height:20px;background:#d2d2d2"></div>
<div class="t" style="left:1266px;top:123.38px;font-size:15.5px;font-weight:bold;color:#2a2a2a">¶</div>
<div class="t" style="left:1195.4px;top:150.06px;font-size:11.5px;color:#444">Paragraph</div>
<div class="a" style="left:836px;top:181px;width:460px;height:560px;background:#fff;border:1px solid #c8c8c8"></div>
<div class="a" style="left:956px;top:277px;width:1px;height:15px;background:#000"></div>
<div class="t" style="left:956.5px;top:277.61px;font-size:13.33px;color:#000;">Example description with some RTF formatting:</div>
<div class="t" style="left:956.3px;top:307.21px;font-size:13.33px;color:#000;">Bold Text</div>
<div class="t" style="left:956.3px;top:322.21px;font-size:13.33px;color:#000;">Italic Text</div>
<div class="t" style="left:956.3px;top:336.71px;font-size:13.33px;color:#000;">Underlined text</div>
<div class="t" style="left:956.3px;top:368.01px;font-size:13.33px;color:#000;">Bullet list</div>
<div class="a" style="left:980.70px;top:389.70px;width:5px;height:5px;border-radius:50%;background:#000"></div>
<div class="t" style="left:1004.6px;top:384.31px;font-size:13.33px;color:#000;">item 1</div>
<div class="a" style="left:980.70px;top:405.50px;width:5px;height:5px;border-radius:50%;background:#000"></div>
<div class="t" style="left:1004.6px;top:400.11px;font-size:13.33px;color:#000;">item 2</div>
<div class="a" style="left:1029.10px;top:421.30px;width:5.2px;height:5.2px;border-radius:50%;border:1px solid #000"></div>
<div class="t" style="left:1052.2px;top:415.41px;font-size:13.33px;color:#000;">sub-item 1</div>
<div class="a" style="left:1076.70px;top:436.40px;width:5px;height:5px;border-radius:50%;background:#000"></div>
<div class="t" style="left:1100.2px;top:431.01px;font-size:13.33px;color:#000;">sub-sub-item 1</div>
<div class="a" style="left:980.70px;top:453.30px;width:5px;height:5px;border-radius:50%;background:#000"></div>
<div class="t" style="left:1004.6px;top:447.91px;font-size:13.33px;color:#000;">item 3</div>
<div class="t" style="left:956.3px;top:493.71px;font-size:13.33px;color:#000;">Numbered list</div>
<div class="t" style="left:980px;top:508.41px;font-size:13.33px;color:#000;">1.</div>
<div class="t" style="left:1004.6px;top:508.41px;font-size:13.33px;color:#000;">item 1</div>
<div class="t" style="left:980px;top:523.71px;font-size:13.33px;color:#000;">2.</div>
<div class="t" style="left:1004.6px;top:523.71px;font-size:13.33px;color:#000;">item 2</div>
<div class="t" style="left:1029px;top:538.71px;font-size:13.33px;color:#000;">1.</div>
<div class="t" style="left:1052.2px;top:538.71px;font-size:13.33px;color:#000;">sub-item 1</div>
<div class="t" style="left:980px;top:553.31px;font-size:13.33px;color:#000;">3.</div>
<div class="t" style="left:1004.6px;top:553.31px;font-size:13.33px;color:#000;">item 3</div>
<div class="t" style="left:1029px;top:568.61px;font-size:13.33px;color:#000;">1.</div>
<div class="t" style="left:1052.2px;top:568.61px;font-size:13.33px;color:#000;">sub-item 1</div>
<div class="t" style="left:1077px;top:583.31px;font-size:13.33px;color:#000;">1.</div>
<div class="t" style="left:1100.2px;top:583.31px;font-size:13.33px;color:#000;">sub-sub-item 1</div>
<div class="t" style="left:980px;top:598.51px;font-size:13.33px;color:#000;">4.</div>
<div class="t" style="left:1004.6px;top:598.51px;font-size:13.33px;color:#000;">item 4</div>
<div class="t" style="left:1004.6px;top:629.21px;font-size:13.33px;color:#000;">Indented text</div>
<div class="t" style="left:956.3px;top:659.41px;font-size:13.33px;color:#000;">Red coloured text</div>
</body></html>
